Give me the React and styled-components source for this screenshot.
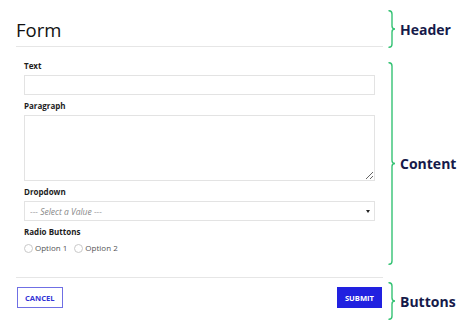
import React from 'react';
import styled, { createGlobalStyle } from 'styled-components';

const GlobalStyle = createGlobalStyle`
  body {
    margin: 0;
    background: #fff;
    font-family: 'Open Sans', 'Liberation Sans', sans-serif;
  }
`;

const Brace = ({ h }) => {
  const mid = h / 2;
  const d = `M1,0.75 Q4,0.75 4,4 V${mid - 3} Q4,${mid} 7,${mid} Q4,${mid} 4,${mid + 3} V${h - 4} Q4,${h - 0.75} 1,${h - 0.75}`;
  return (
    <svg width="8" height={h} viewBox={`0 0 8 ${h}`}>
      <path d={d} fill="none" stroke="#35c274" strokeWidth="1.4" strokeLinecap="round" />
    </svg>
  );
};

const Note = ({ top, h, children }) => (
  <NoteCell $top={top}>
    <Brace h={h} />
    <NoteLabel>{children}</NoteLabel>
  </NoteCell>
);

const App = () => {
  return (
    <>
      <GlobalStyle />
      <Page>
        <Header>
          <Title>Form</Title>
        </Header>
        <Note top={10} h={38}>Header</Note>

        <Content>
          <Field>
            <Label>Text</Label>
            <TextInput type="text" />
          </Field>
          <Field>
            <Label>Paragraph</Label>
            <TextArea />
          </Field>
          <Field>
            <Label>Dropdown</Label>
            <SelectWrap>
              <Select defaultValue="">
                <option value="">--- Select a Value ---</option>
              </Select>
              <Caret />
            </SelectWrap>
          </Field>
          <Field>
            <Label>Radio Buttons</Label>
            <RadioRow>
              <RadioOption>
                <Radio type="radio" name="opt" />
                Option 1
              </RadioOption>
              <RadioOption>
                <Radio type="radio" name="opt" />
                Option 2
              </RadioOption>
            </RadioRow>
          </Field>
        </Content>
        <Note top={14} h={203}>Content</Note>

        <Footer>
          <Button>CANCEL</Button>
          <Button $primary>SUBMIT</Button>
        </Footer>
        <Note top={5} h={38}>Buttons</Note>
      </Page>
    </>
  );
};

export default App;

const Page = styled.div`
  display: grid;
  grid-template-columns: 367px auto;
  padding-left: 16px;
`

const Header = styled.div`
  height: 47px;
  padding-top: 18px;
  box-sizing: border-box;
  border-bottom: 1px solid #e6e6e6;
`

const Title = styled.h1`
  margin: 0;
  font-size: 18.5px;
  line-height: 24px;
  font-weight: 400;
  color: #111;
`

const NoteCell = styled.div`
  display: flex;
  align-items: center;
  align-self: start;
  gap: 4px;
  padding-top: ${props => props.$top}px;
  padding-left: 5px;
`

const NoteLabel = styled.span`
  font-size: 14px;
  font-weight: 700;
  color: #161a4a;
`

const Content = styled.div`
  display: flex;
  flex-direction: column;
  gap: 5px;
  padding: 12px 8px 23px;
`

const Field = styled.div`
  display: flex;
  flex-direction: column;
`

const Label = styled.label`
  font-size: 8px;
  line-height: 12px;
  font-weight: 700;
  color: #1d1d1d;
  margin-bottom: 3px;
`

const TextInput = styled.input`
  display: block;
  height: 20px;
  box-sizing: border-box;
  border: 1px solid #e3e3e3;
  margin: 0;
  outline: none;
`

const TextArea = styled.textarea`
  display: block;
  height: 66px;
  box-sizing: border-box;
  border: 1px solid #e3e3e3;
  margin: 0;
  outline: none;
`

const SelectWrap = styled.div`
  position: relative;
  height: 20px;
`

const Select = styled.select`
  display: block;
  appearance: none;
  width: 100%;
  height: 20px;
  box-sizing: border-box;
  border: 1px solid #e3e3e3;
  border-radius: 0;
  background: #fff;
  margin: 0;
  padding: 0 5px;
  font-family: 'Open Sans', 'Liberation Sans', sans-serif;
  font-size: 8.5px;
  font-style: italic;
  color: #888;
  outline: none;
`

const Caret = styled.span`
  position: absolute;
  right: 5px;
  top: 9px;
  width: 0;
  height: 0;
  border-left: 2.5px solid transparent;
  border-right: 2.5px solid transparent;
  border-top: 3px solid #222;
  pointer-events: none;
`

const RadioRow = styled.div`
  display: flex;
  gap: 7px;
  margin-top: 1px;
`

const RadioOption = styled.label`
  display: flex;
  align-items: center;
  gap: 2px;
  font-size: 8px;
  line-height: 12px;
  color: #555;
`

const Radio = styled.input`
  appearance: none;
  width: 9px;
  height: 9px;
  margin: 0;
  border: 1px solid #c9c9c9;
  border-radius: 50%;
  background: #fff;
`

const Footer = styled.div`
  display: flex;
  justify-content: space-between;
  align-items: flex-start;
  border-top: 1px solid #e6e6e6;
  padding: 9px 1px 0;
  height: 54px;
  box-sizing: border-box;
`

const Button = styled.button`
  height: 21px;
  padding: 0 7px;
  font-family: 'Open Sans', 'Liberation Sans', sans-serif;
  font-size: 7.6px;
  font-weight: 700;
  border: 1px solid ${props => props.$primary ? '#2121e0' : '#6f6fe4'};
  background: ${props => props.$primary ? '#2121e0' : '#fff'};
  color: ${props => props.$primary ? '#fff' : '#3434d6'};
  border-radius: 0;
  cursor: pointer;
`
